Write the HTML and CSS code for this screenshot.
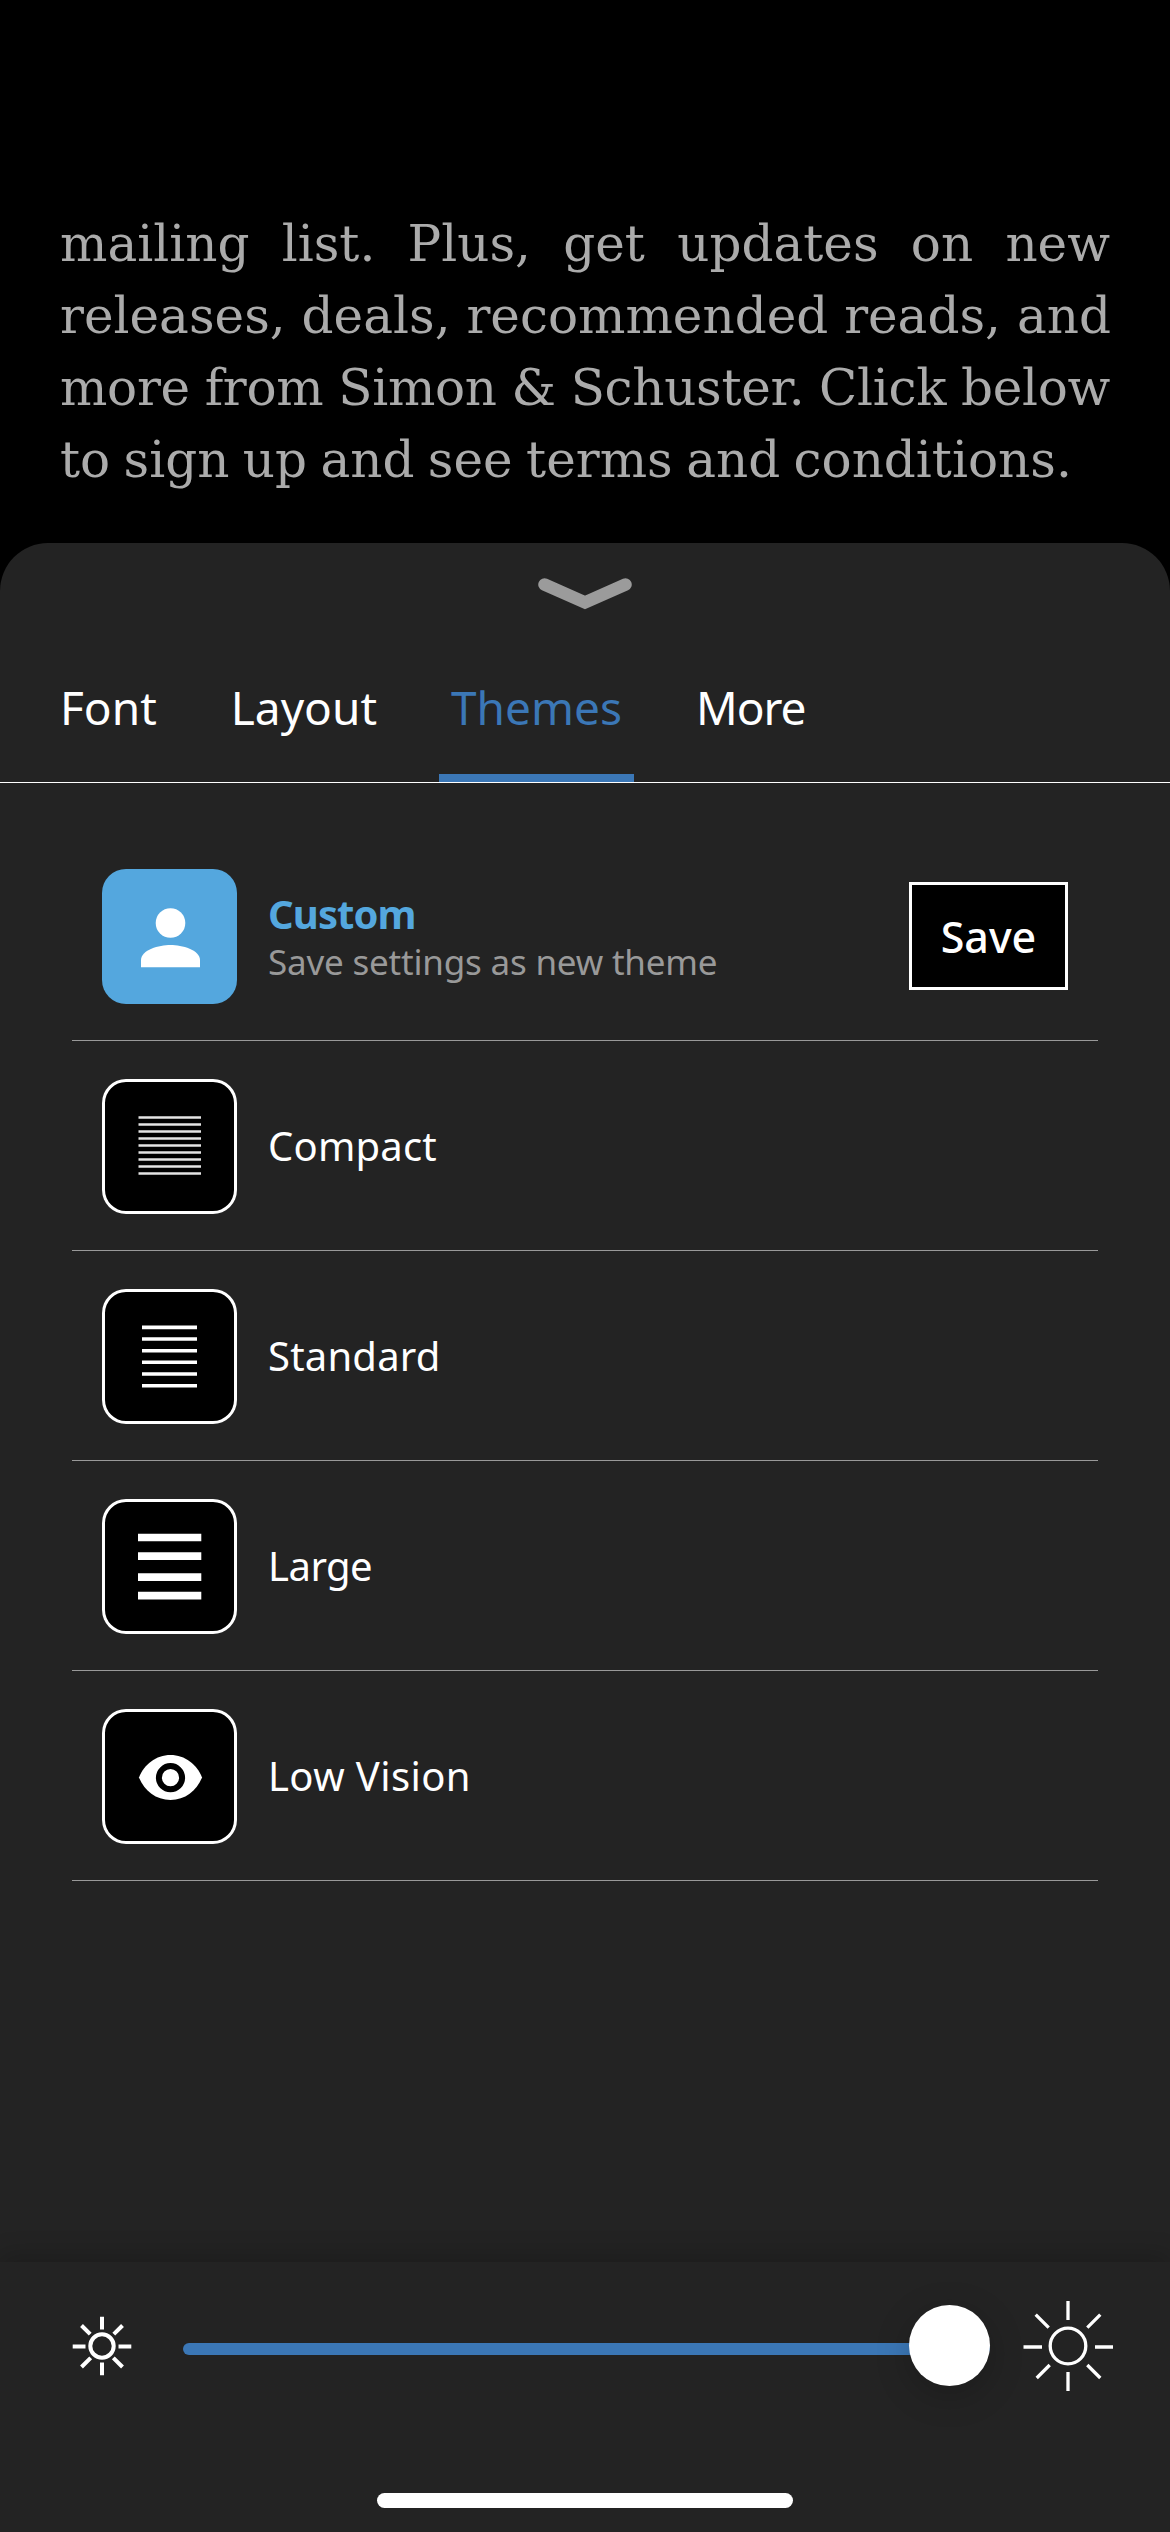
FILE: index.html
```html
<!DOCTYPE html>
<html lang="en">
  <head>
    <meta charset="UTF-8" />
    <meta name="viewport" content="width=device-width, initial-scale=1.0" />
    <title>Reader Themes</title>
    <link rel="stylesheet" href="styles.css">
  </head>
  <body>
    <div class="page-text">
      <div class="line">mailing list. Plus, get updates on new</div>
      <div class="line">releases, deals, recommended reads, and</div>
      <div class="line tight">more from Simon &amp; Schuster. Click below</div>
      <div class="line last">to sign up and see terms and conditions.</div>
    </div>

    <div class="sheet">
      <div class="handle">
        <svg width="94" height="32" viewBox="0 0 94 32">
          <path d="M6.5 6.5 L47 24.5 L87.5 6.5" fill="none" stroke="#9b9b9b" stroke-width="12.5" stroke-linecap="round" />
        </svg>
      </div>

      <nav class="tabs">
        <a class="tab">Font</a>
        <a class="tab">Layout</a>
        <a class="tab active">Themes</a>
        <a class="tab tab-more">More</a>
      </nav>

      <ul class="themes">
        <li class="theme">
          <svg class="tile custom" viewBox="0 0 135 135">
            <circle cx="68.5" cy="54" r="14.8" />
            <path d="M39 98.2V91C39 81 57 76 68.5 76S98 81 98 91V98.2Z" />
          </svg>
          <div class="info">
            <span class="name name-custom">Custom</span>
            <span class="hint">Save settings as new theme</span>
          </div>
          <button class="save">Save</button>
        </li>
        <li class="theme">
          <svg class="tile" viewBox="0 0 135 135">
            <path class="compact" d="M36.5 38.5H99M36.5 45.5H99M36.5 52.5H99M36.5 59.5H99M36.5 66.5H99M36.5 73.5H99M36.5 80.5H99M36.5 87.5H99M36.5 94.5H99" />
          </svg>
          <span class="name">Compact</span>
        </li>
        <li class="theme">
          <svg class="tile" viewBox="0 0 135 135">
            <path class="standard" d="M40 38.4H95M40 50H95M40 61.7H95M40 73.2H95M40 85H95M40 96.7H95" />
          </svg>
          <span class="name">Standard</span>
        </li>
        <li class="theme">
          <svg class="tile" viewBox="0 0 135 135">
            <path class="large" d="M36 38.5H99.3M36 57.2H99.3M36 78.1H99.3M36 96.6H99.3" />
          </svg>
          <span class="name name-large">Large</span>
        </li>
        <li class="theme">
          <svg class="tile" viewBox="0 0 135 135">
            <path d="M37 68.5C42 55.5 54 46 68.5 46S95 55.5 100 68.5C95 81.5 83 91 68.5 91S42 81.5 37 68.5Z" />
            <circle class="iris" cx="68.5" cy="68.7" r="11.6" />
          </svg>
          <span class="name name-low">Low Vision</span>
        </li>
      </ul>

      <div class="brightness">
        <svg class="sun-small" viewBox="-30 -30 60 60">
          <circle r="11.7" />
          <path d="M0 -29.3V-16.5M0 16.5V29.3M-29.3 .5H-16.5M16.5 .5H29.3M-20.5 -20.5L-11.8 -11.8M20.5 -20.5L11.8 -11.8M-20.5 21L-11.3 11.8M20.5 21L11.3 11.8" />
        </svg>
        <div class="track">
          <div class="knob"></div>
        </div>
        <svg class="sun-large" viewBox="-45 -45 90 90">
          <circle r="17.8" />
          <path d="M0 -45V-26M0 26V45M-44.5 1H-26M27 1H45M-32.3 -31.3L-19.3 -18.3M32.3 -31.3L19.3 -18.3M-31.3 32L-18.3 19M32.3 32L19.3 19" />
        </svg>
      </div>
      <div class="home-bar"></div>
    </div>
  </body>
</html>
```

FILE: styles.css
```css
* {
  box-sizing: border-box;
}

body {
  margin: 0;
  width: 1170px;
  height: 2532px;
  background-color: #000;
  font-family: "Noto Sans", sans-serif;
  color: #fff;
  display: flex;
  flex-direction: column;
  overflow: hidden;
}

.page-text {
  height: 543px;
  padding: 208px 60px 0;
  font-family: "DejaVu Serif", serif;
  font-size: 50px;
  line-height: 72px;
  color: #ababab;
}

.line {
  text-align: justify;
  text-align-last: justify;
  white-space: nowrap;
}

.line.tight {
  letter-spacing: -0.3px;
  word-spacing: -8px;
}

.line.last {
  text-align-last: left;
  word-spacing: -2.5px;
}

/* bottom sheet */
.sheet {
  flex: 1;
  background-color: #232323;
  border-radius: 48px 48px 0 0;
  display: flex;
  flex-direction: column;
}

.handle {
  height: 107px;
  padding-top: 35px;
  text-align: center;
  line-height: 0;
}

.tabs {
  height: 133px;
  border-bottom: 1px solid #fff;
  padding-left: 48px;
  display: flex;
  gap: 50px;
}

.tab {
  height: 132px;
  padding: 0 12px;
  font-size: 46px;
  line-height: 115px;
  white-space: nowrap;
}

.tab.active {
  color: #3b77b6;
  border-bottom: 8px solid #3b77b6;
}

.tab-more {
  letter-spacing: -1px;
}

.themes {
  list-style: none;
  margin: 0;
  padding: 48px 72px 0;
  flex: 1;
}

.theme {
  height: 210px;
  padding: 1px 30px 0;
  border-bottom: 1px solid #999;
  display: flex;
  align-items: center;
}

.tile {
  width: 135px;
  height: 135px;
  flex: none;
  margin-right: 31px;
  background-color: #000;
  border-radius: 24px;
  box-shadow: inset 0 0 0 3px #fff;
  fill: #fff;
}

.tile.custom {
  background-color: #54a7de;
  box-shadow: none;
}

.compact {
  stroke: #e4e4e4;
  stroke-width: 2.3;
}

.standard {
  stroke: #fff;
  stroke-width: 3.6;
}

.large {
  stroke: #fff;
  stroke-width: 7.7;
}

.iris {
  stroke: #000;
  stroke-width: 6;
}

.info {
  padding-top: 2px;
  display: flex;
  flex-direction: column;
}

.name {
  font-size: 40px;
  line-height: 50px;
  letter-spacing: 0.2px;
}

.name-custom {
  color: #54a7de;
  font-weight: bold;
  letter-spacing: -0.9px;
}

.name-large {
  letter-spacing: -0.5px;
}

.name-low {
  letter-spacing: 0.4px;
}

.hint {
  color: #999;
  font-size: 35px;
  line-height: 46px;
  letter-spacing: -0.2px;
}

.save {
  width: 159px;
  height: 108px;
  margin-left: auto;
  padding: 0;
  background-color: #000;
  border: 3px solid #fff;
  color: #fff;
  font-family: inherit;
  font-size: 43px;
  font-weight: 500;
}

/* brightness slider */
.brightness {
  height: 231px;
  padding: 39px 57px 0 72px;
  display: flex;
  align-items: flex-start;
  box-shadow: 0 -6px 24px rgba(0, 0, 0, 0.2);
  clip-path: inset(-40px 0 0 0);
}

.brightness svg {
  fill: none;
  stroke: #fff;
  flex: none;
}

.sun-small {
  width: 60px;
  height: 60px;
  margin-top: 15px;
  stroke-width: 4;
}

.sun-large {
  width: 90px;
  height: 90px;
  stroke-width: 3.3;
}

.track {
  width: 807px;
  height: 12px;
  margin: 42px 33px 0 51px;
  border-radius: 6px;
  background-color: #3b77b6;
  display: flex;
  align-items: center;
  justify-content: flex-end;
}

.knob {
  width: 81px;
  height: 81px;
  flex: none;
  margin-top: -7px;
  border-radius: 50%;
  background-color: #fff;
  box-shadow: 0 9px 36px rgba(0, 0, 0, 0.2);
}

.home-bar {
  width: 416px;
  height: 15px;
  margin: 0 auto 24px;
  border-radius: 8px;
  background-color: #fff;
}
```
